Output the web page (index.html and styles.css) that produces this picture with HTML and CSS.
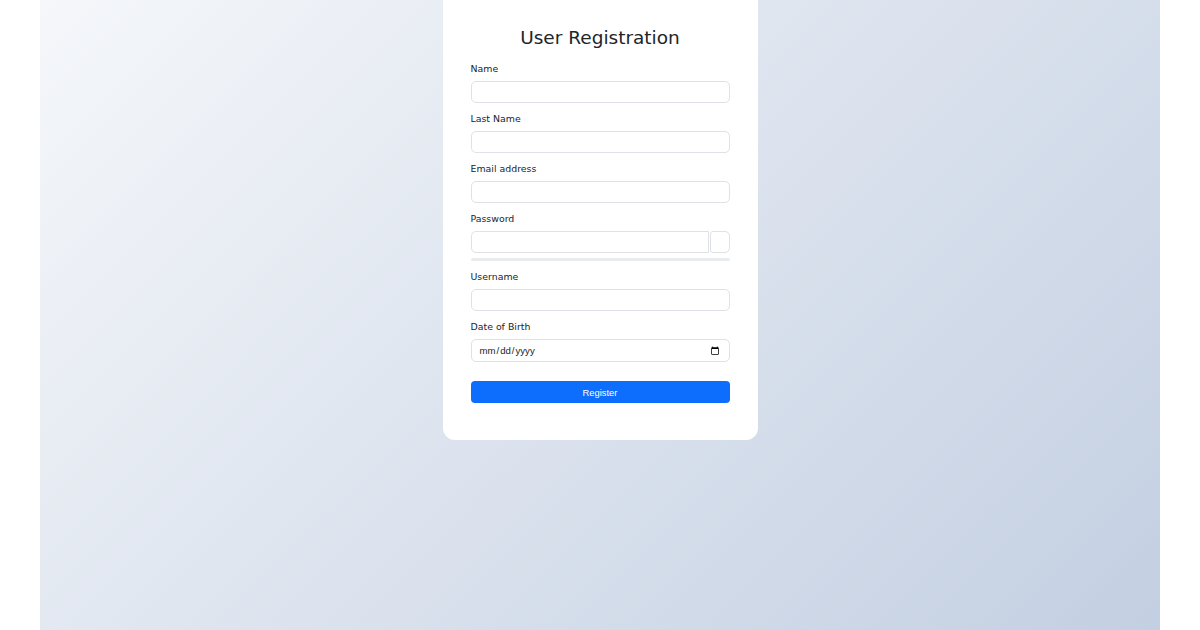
FILE: index.html
```html
<!DOCTYPE html>
<html lang="en">
<head>
  <meta charset="UTF-8">
  <meta name="viewport" content="width=device-width, initial-scale=1.0">
  <title>User Registration</title>
  <link rel="stylesheet" href="styles.css">
</head>
<body>
  <div class="page">
    <div class="card">
      <h2>User Registration</h2>
      <form>
        <div class="field">
          <label for="name">Name</label>
          <input type="text" id="name">
        </div>
        <div class="field">
          <label for="lastname">Last Name</label>
          <input type="text" id="lastname">
        </div>
        <div class="field">
          <label for="email">Email address</label>
          <input type="email" id="email">
        </div>
        <div class="field">
          <label for="password">Password</label>
          <div class="input-group">
            <input type="password" id="password">
            <button type="button" class="toggle"></button>
          </div>
          <div class="strength"></div>
        </div>
        <div class="field">
          <label for="username">Username</label>
          <input type="text" id="username">
        </div>
        <div class="field">
          <label for="dob">Date of Birth</label>
          <input type="date" id="dob">
        </div>
        <button type="submit" class="register">Register</button>
      </form>
    </div>
  </div>
</body>
</html>
```

FILE: styles.css
```css
body {
  margin: 0;
  font-family: 'DejaVu Sans', sans-serif;
  color: #212529;
  background: #fff;
}

.page {
  margin: 0 40px;
  height: 630px;
  background: linear-gradient(135deg, #f5f7fa 0%, #c3cfe2 100%);
  display: flex;
  justify-content: center;
  align-items: flex-start;
}

.card {
  width: 315px;
  box-sizing: border-box;
  background: #fff;
  border-radius: 0 0 12px 12px;
  padding: 27px 28px 37px;
}

.card h2 {
  margin: 0 0 13px;
  font-size: 18.5px;
  font-weight: 400;
  line-height: 22px;
  text-align: center;
}

.field {
  margin-bottom: 9px;
}

.field label {
  display: block;
  font-size: 9.4px;
  line-height: 14px;
  margin-bottom: 5px;
}

.field input {
  display: block;
  width: 100%;
  box-sizing: border-box;
  height: 22px;
  border: 1px solid #dee2e6;
  border-radius: 5px;
  padding: 0 7px;
  font-family: 'Liberation Sans', sans-serif;
  font-size: 9.6px;
  color: #212529;
  background: #fff;
}

.field input[type="date"] {
  height: 23px;
}

.input-group {
  display: flex;
}

.input-group input {
  flex: 1;
  border-radius: 5px 0 0 5px;
}

.toggle {
  width: 20px;
  height: 22px;
  border: 1px solid #dee2e6;
  border-radius: 3px 5px 5px 3px;
  background: #fff;
  padding: 0;
  margin-left: 1px;
}

.strength {
  height: 3px;
  margin-top: 5px;
  background: #e9ecef;
  border-radius: 2px;
}

.register {
  display: block;
  width: 100%;
  height: 22px;
  margin-top: 19px;
  border: none;
  border-radius: 4px;
  background: #0d6efd;
  color: #fff;
  font-family: 'Liberation Sans', sans-serif;
  font-size: 9.4px;
}
```
